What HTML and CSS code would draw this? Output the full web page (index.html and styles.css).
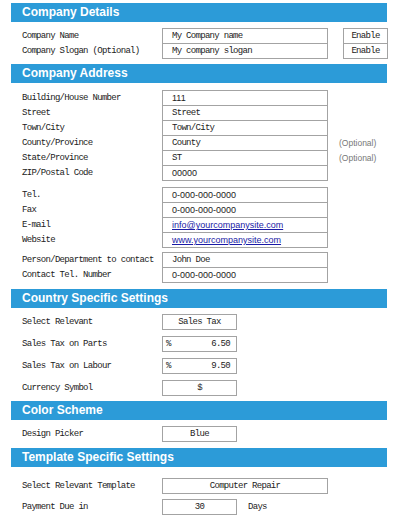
FILE: index.html
```
<!DOCTYPE html>
<html lang="en">
<head>
<meta charset="UTF-8">
<meta name="viewport" content="width=device-width, initial-scale=1.0">
<title>Invoice Settings</title>
<link rel="stylesheet" href="styles.css">
</head>
<body>
<div class="page">

    <h2 class="bar">Company Details</h2>
    <div class="group g-details">
        <div class="row">
            <span class="label">Company Name</span>
            <span class="cell wide">My Company name</span>
            <span class="cell toggle">Enable</span>
        </div>
        <div class="row">
            <span class="label">Company Slogan (Optional)</span>
            <span class="cell wide">My company slogan</span>
            <span class="cell toggle">Enable</span>
        </div>
    </div>

    <h2 class="bar">Company Address</h2>
    <div class="group g-address">
        <div class="row">
            <span class="label">Building/House Number</span>
            <span class="cell wide sans">111</span>
        </div>
        <div class="row">
            <span class="label">Street</span>
            <span class="cell wide">Street</span>
        </div>
        <div class="row">
            <span class="label">Town/City</span>
            <span class="cell wide">Town/City</span>
        </div>
        <div class="row">
            <span class="label">County/Province</span>
            <span class="cell wide">County</span>
            <span class="note">(Optional)</span>
        </div>
        <div class="row">
            <span class="label">State/Province</span>
            <span class="cell wide">ST</span>
            <span class="note">(Optional)</span>
        </div>
        <div class="row">
            <span class="label">ZIP/Postal Code</span>
            <span class="cell wide sans">00000</span>
        </div>
    </div>

    <div class="group g-contact">
        <div class="row">
            <span class="label">Tel.</span>
            <span class="cell wide sans">0-000-000-0000</span>
        </div>
        <div class="row">
            <span class="label">Fax</span>
            <span class="cell wide sans">0-000-000-0000</span>
        </div>
        <div class="row">
            <span class="label">E-mail</span>
            <span class="cell wide sans"><a href="#">info@yourcompanysite.com</a></span>
        </div>
        <div class="row">
            <span class="label">Website</span>
            <span class="cell wide sans"><a href="#">www.yourcompanysite.com</a></span>
        </div>
    </div>

    <div class="group g-person">
        <div class="row">
            <span class="label">Person/Department to contact</span>
            <span class="cell wide">John Doe</span>
        </div>
        <div class="row">
            <span class="label">Contact Tel. Number</span>
            <span class="cell wide sans">0-000-000-0000</span>
        </div>
    </div>

    <h2 class="bar">Country Specific Settings</h2>
    <div class="group g-country">
        <div class="row">
            <span class="label">Select Relevant</span>
            <span class="cell short center">Sales Tax</span>
        </div>
        <div class="row">
            <span class="label">Sales Tax on Parts</span>
            <span class="cell short split"><i>%</i>6.50</span>
        </div>
        <div class="row">
            <span class="label">Sales Tax on Labour</span>
            <span class="cell short split"><i>%</i>9.50</span>
        </div>
        <div class="row">
            <span class="label">Currency Symbol</span>
            <span class="cell short center">$</span>
        </div>
    </div>

    <h2 class="bar">Color Scheme</h2>
    <div class="group g-color">
        <div class="row">
            <span class="label">Design Picker</span>
            <span class="cell short center">Blue</span>
        </div>
    </div>

    <h2 class="bar">Template Specific Settings</h2>
    <div class="group g-template">
        <div class="row">
            <span class="label">Select Relevant Template</span>
            <span class="cell wide center">Computer Repair</span>
        </div>
        <div class="row">
            <span class="label">Payment Due in</span>
            <span class="cell short center">30</span>
            <span class="unit">Days</span>
        </div>
    </div>

</div>
</body>
</html>
```

FILE: styles.css
```
body {
    margin: 0;
    background: #fff;
    color: #222;
    font-family: "Liberation Mono", "Courier New", monospace;
    font-size: 9px;
    letter-spacing: -0.7px;
}
.page {
    padding: 3px 13px 0 11px;
}
.bar {
    margin: 0;
    height: 19px;
    line-height: 19px;
    padding-left: 11px;
    background-color: #2c9bd8;
    color: #fff;
    font-family: "Liberation Sans", Arial, sans-serif;
    font-size: 12px;
    font-weight: bold;
    letter-spacing: 0;
}
.group {
    display: flex;
    flex-direction: column;
    padding-left: 11px;
}
.row {
    display: flex;
    align-items: center;
    height: 16px;
    margin-top: -1px;
}
.row:first-child {
    margin-top: 0;
}
.label {
    width: 140px;
    flex: none;
}
.cell {
    box-sizing: border-box;
    height: 16px;
    line-height: 14px;
    border: 1px solid #a3a3a3;
    padding-left: 9px;
    white-space: nowrap;
    overflow: hidden;
    flex: none;
}
.wide {
    width: 166px;
}
.short {
    width: 75px;
}
.toggle {
    width: 45px;
    margin-left: 15px;
    padding: 0;
    text-align: center;
}
.center {
    text-align: center;
    padding: 0;
}
.split {
    display: flex;
    justify-content: space-between;
    padding: 0 6px 0 3px;
}
.split i {
    font-style: normal;
}
.sans {
    font-family: "Liberation Sans", Arial, sans-serif;
    letter-spacing: 0;
}
.sans a {
    color: #1a1aa6;
}
.note {
    margin-left: 11px;
    color: #777;
    font-family: "Liberation Sans", Arial, sans-serif;
    font-size: 8.5px;
    letter-spacing: 0;
}
.unit {
    margin-left: 11px;
}

/* spacing between the sections */
.g-details { margin: 6px 0 5px; }
.g-address { margin: 7px 0 6px; }
.g-contact { margin-bottom: 4px; }
.g-person { margin-bottom: 6px; }
.g-country { margin: 6px 0 5px; gap: 6px; }
.g-country .row { margin-top: 0; }
.g-color { margin: 6px 0 6px; }
.g-template { margin-top: 11px; gap: 5px; }
.g-template .row { margin-top: 0; }
```
